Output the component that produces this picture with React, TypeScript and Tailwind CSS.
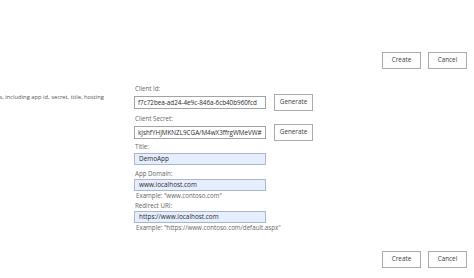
const FONT = "font-['Open_Sans','Noto_Sans',sans-serif]";

function Btn({ children }: { children: string }) {
  return (
    <button className="w-[39px] h-[17px] border border-[#ababab] bg-[#fdfdfd] text-[#444] text-[6.3px] leading-none flex items-center justify-center">
      {children}
    </button>
  );
}

function Label({ children, className = '' }: { children: string; className?: string }) {
  return <div className={`h-[11px] leading-[11px] pl-[1px] text-[6.2px] text-[#666] ${className}`}>{children}</div>;
}

function Example({ children }: { children: string }) {
  return <div className="h-[9px] leading-[9px] pl-[2px] text-[6.2px] text-[#666]">{children}</div>;
}

function WhiteInput({ value }: { value: string }) {
  return (
    <div className="w-[132px] h-[13px] border border-[#a3a3a3] bg-white px-[3px] text-[6.3px] leading-[11px] text-[#2a2a2a] whitespace-nowrap overflow-hidden">
      {value}
    </div>
  );
}

function BlueInput({ value }: { value: string }) {
  return (
    <div className="w-[132px] h-[12px] border border-[#a9b6cf] bg-[#e6eefd] px-[4px] text-[6.4px] leading-[10px] text-[#2a2a2a] whitespace-nowrap overflow-hidden">
      {value}
    </div>
  );
}

export default function App() {
  return (
    <div className={`w-[474px] h-[278px] bg-white overflow-hidden flex flex-col ${FONT}`}>
      {/* top actions */}
      <div className="pt-[52px] pr-[7px] flex justify-end gap-[7px]">
        <Btn>Create</Btn>
        <Btn>Cancel</Btn>
      </div>

      <div className="mt-[14px] flex">
        {/* description column, clipped on the left */}
        <div className="w-[134px] pt-[9px] overflow-hidden flex justify-end pr-[30px]">
          <div className="whitespace-nowrap text-[5.8px] leading-[10px] text-[#555]">
            Specify the app details, including app id, secret, title, hosting
          </div>
        </div>

        {/* form */}
        <div className="flex flex-col">
          <Label>Client Id:</Label>
          <div className="flex items-center gap-[8px] h-[17px]">
            <WhiteInput value="f7c72bea-ad24-4e9c-846a-6cb40b960fcd" />
            <Btn>Generate</Btn>
          </div>

          <Label className="mt-[2px]">Client Secret:</Label>
          <div className="flex items-center gap-[8px] h-[17px]">
            <WhiteInput value="kJshfYHJMKNZL9CGA/M4wX3ffrgWMeVW#" />
            <Btn>Generate</Btn>
          </div>

          <Label>Title:</Label>
          <div className="mt-[1px]">
            <BlueInput value="DemoApp" />
          </div>

          <Label className="mt-[3px]">App Domain:</Label>
          <BlueInput value="www.localhost.com" />
          <Example>Example: "www.contoso.com"</Example>

          <Label>Redirect URI:</Label>
          <BlueInput value="https://www.localhost.com" />
          <Example>Example: "https://www.contoso.com/default.aspx"</Example>
        </div>
      </div>

      {/* bottom actions */}
      <div className="mt-auto pb-[10px] pr-[7px] flex justify-end gap-[7px]">
        <Btn>Create</Btn>
        <Btn>Cancel</Btn>
      </div>
    </div>
  );
}
